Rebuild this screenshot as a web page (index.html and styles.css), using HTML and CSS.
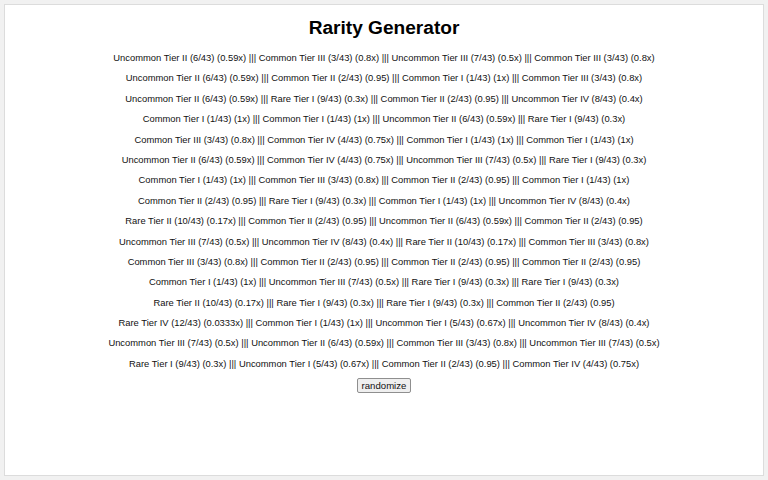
FILE: index.html
```html
<!DOCTYPE html>
<html>
<head>
<meta charset="utf-8">
<link rel="stylesheet" href="styles.css">
</head>
<body>
<div class="card">
  <h1 class="title">Rarity Generator</h1>
  <div class="lines">
    <p class="line">Uncommon Tier II (6/43) (0.59x) ||| Common Tier III (3/43) (0.8x) ||| Uncommon Tier III (7/43) (0.5x) ||| Common Tier III (3/43) (0.8x)</p>
    <p class="line">Uncommon Tier II (6/43) (0.59x) ||| Common Tier II (2/43) (0.95) ||| Common Tier I (1/43) (1x) ||| Common Tier III (3/43) (0.8x)</p>
    <p class="line">Uncommon Tier II (6/43) (0.59x) ||| Rare Tier I (9/43) (0.3x) ||| Common Tier II (2/43) (0.95) ||| Uncommon Tier IV (8/43) (0.4x)</p>
    <p class="line">Common Tier I (1/43) (1x) ||| Common Tier I (1/43) (1x) ||| Uncommon Tier II (6/43) (0.59x) ||| Rare Tier I (9/43) (0.3x)</p>
    <p class="line">Common Tier III (3/43) (0.8x) ||| Common Tier IV (4/43) (0.75x) ||| Common Tier I (1/43) (1x) ||| Common Tier I (1/43) (1x)</p>
    <p class="line">Uncommon Tier II (6/43) (0.59x) ||| Common Tier IV (4/43) (0.75x) ||| Uncommon Tier III (7/43) (0.5x) ||| Rare Tier I (9/43) (0.3x)</p>
    <p class="line">Common Tier I (1/43) (1x) ||| Common Tier III (3/43) (0.8x) ||| Common Tier II (2/43) (0.95) ||| Common Tier I (1/43) (1x)</p>
    <p class="line">Common Tier II (2/43) (0.95) ||| Rare Tier I (9/43) (0.3x) ||| Common Tier I (1/43) (1x) ||| Uncommon Tier IV (8/43) (0.4x)</p>
    <p class="line">Rare Tier II (10/43) (0.17x) ||| Common Tier II (2/43) (0.95) ||| Uncommon Tier II (6/43) (0.59x) ||| Common Tier II (2/43) (0.95)</p>
    <p class="line">Uncommon Tier III (7/43) (0.5x) ||| Uncommon Tier IV (8/43) (0.4x) ||| Rare Tier II (10/43) (0.17x) ||| Common Tier III (3/43) (0.8x)</p>
    <p class="line">Common Tier III (3/43) (0.8x) ||| Common Tier II (2/43) (0.95) ||| Common Tier II (2/43) (0.95) ||| Common Tier II (2/43) (0.95)</p>
    <p class="line">Common Tier I (1/43) (1x) ||| Uncommon Tier III (7/43) (0.5x) ||| Rare Tier I (9/43) (0.3x) ||| Rare Tier I (9/43) (0.3x)</p>
    <p class="line">Rare Tier II (10/43) (0.17x) ||| Rare Tier I (9/43) (0.3x) ||| Rare Tier I (9/43) (0.3x) ||| Common Tier II (2/43) (0.95)</p>
    <p class="line">Rare Tier IV (12/43) (0.0333x) ||| Common Tier I (1/43) (1x) ||| Uncommon Tier I (5/43) (0.67x) ||| Uncommon Tier IV (8/43) (0.4x)</p>
    <p class="line">Uncommon Tier III (7/43) (0.5x) ||| Uncommon Tier II (6/43) (0.59x) ||| Common Tier III (3/43) (0.8x) ||| Uncommon Tier III (7/43) (0.5x)</p>
    <p class="line">Rare Tier I (9/43) (0.3x) ||| Uncommon Tier I (5/43) (0.67x) ||| Common Tier II (2/43) (0.95) ||| Common Tier IV (4/43) (0.75x)</p>
  </div>
  <button class="btn" type="button">randomize</button>
</div>
</body>
</html>
```
FILE: styles.css
```css
html, body {
  margin: 0;
  padding: 0;
}
body {
  background: #f1f1f1;
  padding: 4px 4px;
  font-family: "Liberation Sans", Arial, sans-serif;
  color: #111;
}
.card {
  box-sizing: border-box;
  height: 472px;
  background: #fff;
  border: 1px solid #dcdcdc;
  text-align: center;
  padding-top: 12px;
}
.title {
  font-size: 19.1px;
  font-weight: bold;
  margin: 0 0 13px;
  color: #000;
}
.lines {
  display: flex;
  flex-direction: column;
  gap: 9.2px;
}
.line {
  margin: 0;
  font-size: 9.4px;
  line-height: 11.2px;
}
.btn {
  margin-top: 9px;
  font-family: "Liberation Sans", Arial, sans-serif;
  font-size: 9.6px;
  padding: 1px 4px;
  color: #111;
  background: #efefef;
  border: 1px solid #8f8f8f;
  border-radius: 2px;
}
```
